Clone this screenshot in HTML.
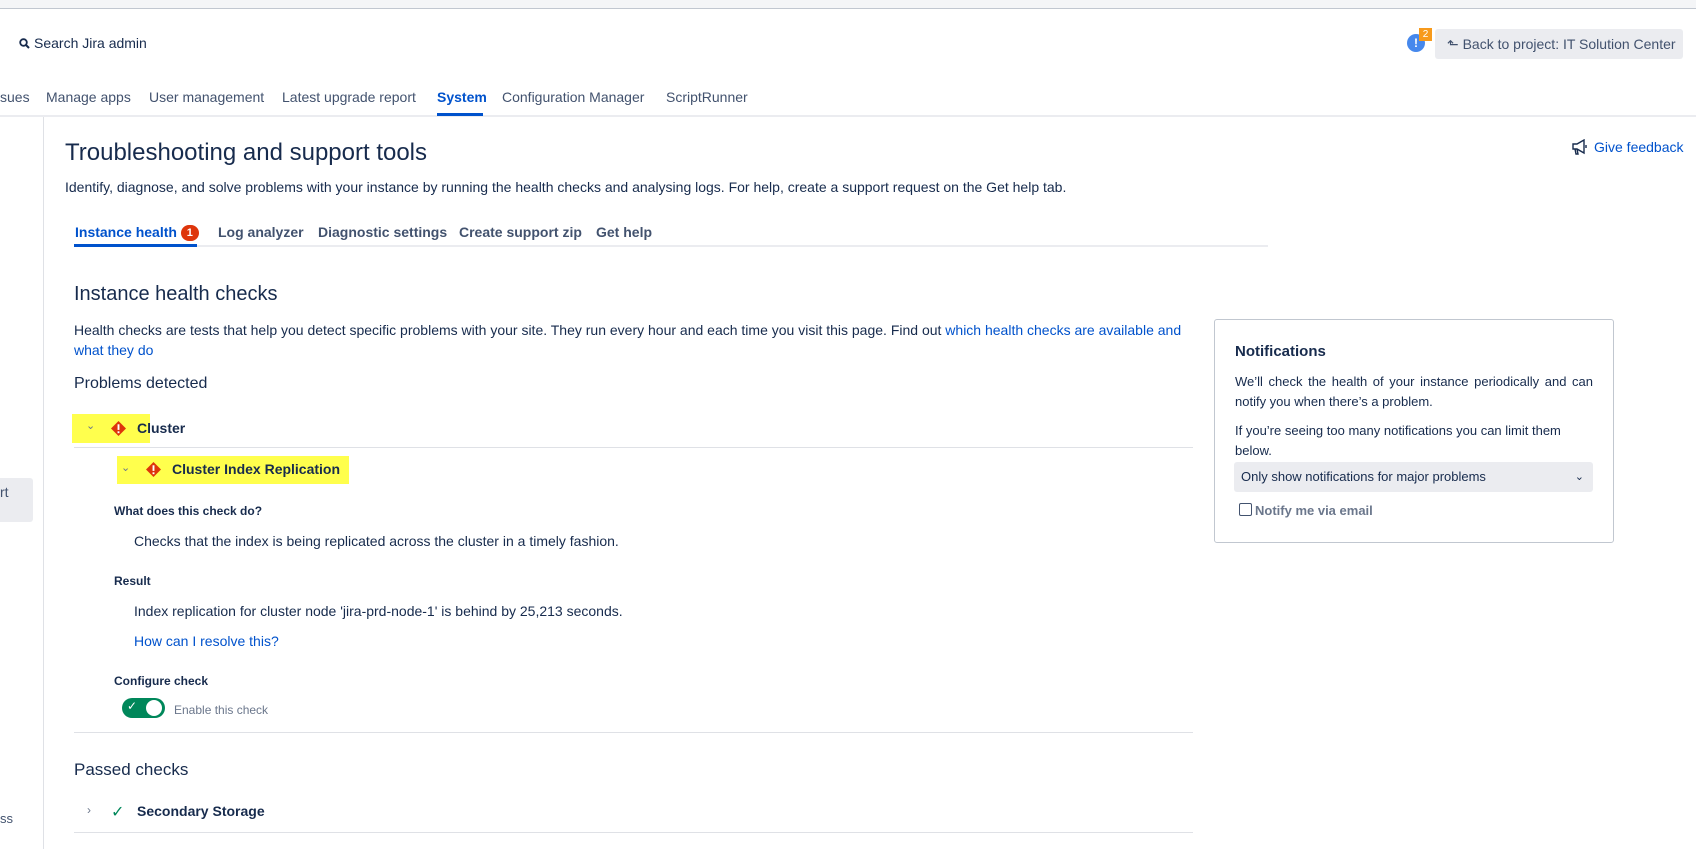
<!DOCTYPE html>
<html><head><meta charset="utf-8"><style>
*{box-sizing:border-box;margin:0;padding:0}
body{width:1696px;height:849px;overflow:hidden;background:#fff;font-family:"Liberation Sans",Arial,sans-serif;color:#172b4d;position:relative}
.a{position:absolute;white-space:nowrap}
.hl{background:#ffff4d}
.b{font-weight:bold}
</style></head><body>
<div class="a" style="left:0;top:0;width:1696px;height:9px;background:#f4f5f7;border-bottom:1px solid #c1c7d0"></div>
<div class="a" style="left:19px;top:35px;font-size:14px;color:#172b4d"><svg width="11" height="11" viewBox="0 0 11 11" style="vertical-align:-1px;margin-right:4px"><circle cx="4.5" cy="4.5" r="3.3" fill="none" stroke="#172b4d" stroke-width="1.8"/><path d="M7 7l3 3" stroke="#172b4d" stroke-width="2"/></svg>Search Jira admin</div>
<div class="a" style="left:1407px;top:34px;width:18px;height:18px;border-radius:50%;background:#4688ec;color:#fff;font-size:12px;font-weight:bold;text-align:center;line-height:18px">!</div>
<div class="a" style="left:1419px;top:28px;width:13px;height:13px;background:#f79a1c;color:#fff;font-size:10px;text-align:center;line-height:13px">2</div>
<div class="a" style="left:1435px;top:29px;width:248px;height:30px;background:#ebecf0;border-radius:3px;font-size:14px;color:#42526e;line-height:30px;padding-left:12px">⬑ Back to project: IT Solution Center</div>
<div class="a" style="top:89px;font-size:14px;color:#42526e;left:0">sues</div>
<div class="a" style="top:89px;font-size:14px;color:#42526e;left:46px">Manage apps</div>
<div class="a" style="top:89px;font-size:14px;color:#42526e;left:149px">User management</div>
<div class="a" style="top:89px;font-size:14px;color:#42526e;left:282px">Latest upgrade report</div>
<div class="a b" style="top:89px;font-size:14px;color:#0052cc;left:437px">System</div>
<div class="a" style="top:89px;font-size:14px;color:#42526e;left:502px">Configuration Manager</div>
<div class="a" style="top:89px;font-size:14px;color:#42526e;left:666px">ScriptRunner</div>
<div class="a" style="left:0;top:115px;width:1696px;height:2px;background:#ebecf0"></div>
<div class="a" style="left:437px;top:113px;width:46px;height:3px;background:#0052cc"></div>
<div class="a" style="left:43px;top:117px;width:1px;height:732px;background:#dfe1e6"></div>
<div class="a" style="left:0;top:478px;width:33px;height:44px;background:#ebecf0;border-radius:0 3px 3px 0"></div>
<div class="a" style="left:0;top:484px;font-size:14px;color:#42526e">rt</div>
<div class="a" style="left:0;top:811px;font-size:13px;color:#42526e">ss</div>
<div class="a" style="left:65px;top:139px;font-size:24px;color:#172b4d;font-weight:500">Troubleshooting and support tools</div>
<div class="a" style="left:65px;top:179px;font-size:14px;color:#172b4d">Identify, diagnose, and solve problems with your instance by running the health checks and analysing logs. For help, create a support request on the Get help tab.</div>
<div class="a" style="left:1572px;top:139px;font-size:14px;color:#0052cc"><svg width="18" height="16" viewBox="0 0 18 16" style="vertical-align:-3px;margin-right:4px"><path d="M1 5h4l7-4v13l-7-4H1zM3 10l1 5h2l-1-5M14 6v3" fill="none" stroke="#172b4d" stroke-width="1.4"/></svg>Give feedback</div>
<div class="a b" style="left:75px;top:224px;font-size:14px;color:#0052cc">Instance health <span style="display:inline-block;width:18px;height:16px;border-radius:8px;background:#de350b;color:#fff;font-size:11px;text-align:center;line-height:16px;vertical-align:1px">1</span></div>
<div class="a b" style="left:218px;top:224px;font-size:14px;color:#42526e">Log analyzer</div>
<div class="a b" style="left:318px;top:224px;font-size:14px;color:#42526e">Diagnostic settings</div>
<div class="a b" style="left:459px;top:224px;font-size:14px;color:#42526e">Create support zip</div>
<div class="a b" style="left:596px;top:224px;font-size:14px;color:#42526e">Get help</div>
<div class="a" style="left:74px;top:245px;width:1194px;height:2px;background:#ebecf0"></div>
<div class="a" style="left:74px;top:244px;width:123px;height:3px;background:#0052cc"></div>
<div class="a" style="left:74px;top:283px;font-size:20px;color:#172b4d">Instance health checks</div>
<div class="a" style="left:74px;top:320px;font-size:14px;line-height:20px;color:#172b4d;white-space:normal;width:1125px">Health checks are tests that help you detect specific problems with your site. They run every hour and each time you visit this page. Find out <span style="color:#0052cc">which health checks are available and what they do</span></div>
<div class="a" style="left:74px;top:375px;font-size:16px;color:#172b4d">Problems detected</div>
<div class="a hl" style="left:72px;top:414px;width:78px;height:29px"></div>
<div class="a" style="left:86px;top:419px;font-size:11px;color:#6b778c">⌄</div>
<div class="a" style="left:111px;top:421px"><svg width="15" height="15" viewBox="0 0 16 16"><path d="M8 0l8 8-8 8-8-8z" fill="#de350b"/><rect x="7" y="3.5" width="2" height="6" fill="#fff"/><rect x="7" y="11" width="2" height="2" fill="#fff"/></svg></div>
<div class="a b" style="left:137px;top:420px;font-size:14px">Cluster</div>
<div class="a" style="left:74px;top:447px;width:1119px;height:1px;background:#dfe1e6"></div>
<div class="a hl" style="left:117px;top:456px;width:232px;height:28px"></div>
<div class="a" style="left:121px;top:461px;font-size:11px;color:#6b778c">⌄</div>
<div class="a" style="left:146px;top:462px"><svg width="15" height="15" viewBox="0 0 16 16"><path d="M8 0l8 8-8 8-8-8z" fill="#de350b"/><rect x="7" y="3.5" width="2" height="6" fill="#fff"/><rect x="7" y="11" width="2" height="2" fill="#fff"/></svg></div>
<div class="a b" style="left:172px;top:461px;font-size:14px">Cluster Index Replication</div>
<div class="a b" style="left:114px;top:504px;font-size:12px;color:#172b4d">What does this check do?</div>
<div class="a" style="left:134px;top:533px;font-size:14px">Checks that the index is being replicated across the cluster in a timely fashion.</div>
<div class="a b" style="left:114px;top:574px;font-size:12px">Result</div>
<div class="a" style="left:134px;top:603px;font-size:14px">Index replication for cluster node 'jira-prd-node-1' is behind by 25,213 seconds.</div>
<div class="a" style="left:134px;top:633px;font-size:14px;color:#0052cc">How can I resolve this?</div>
<div class="a b" style="left:114px;top:674px;font-size:12px">Configure check</div>
<div class="a" style="left:122px;top:698px;width:43px;height:20px;border-radius:10px;background:#00875a"></div>
<div class="a" style="left:146px;top:700px;width:16px;height:16px;border-radius:50%;background:#fff"></div>
<div class="a" style="left:127px;top:699px;font-size:12px;color:#fff">✓</div>
<div class="a" style="left:174px;top:703px;font-size:12px;color:#6b778c">Enable this check</div>
<div class="a" style="left:74px;top:732px;width:1119px;height:1px;background:#dfe1e6"></div>
<div class="a" style="left:74px;top:760px;font-size:17px">Passed checks</div>
<div class="a" style="left:87px;top:803px;font-size:12px;color:#6b778c">›</div>
<div class="a" style="left:111px;top:802px;font-size:16px;color:#00875a">✓</div>
<div class="a b" style="left:137px;top:803px;font-size:14px">Secondary Storage</div>
<div class="a" style="left:74px;top:832px;width:1119px;height:1px;background:#dfe1e6"></div>
<div class="a" style="left:1214px;top:319px;width:400px;height:224px;border:1px solid #c1c7d0;border-radius:3px"></div>
<div class="a b" style="left:1235px;top:343px;font-size:15px">Notifications</div>
<div class="a" style="left:1235px;top:372px;width:358px;font-size:13px;line-height:20px;white-space:normal;text-align:justify">We’ll check the health of your instance periodically and can notify you when there’s a problem.</div>
<div class="a" style="left:1235px;top:421px;width:358px;font-size:13px;line-height:20px;white-space:normal">If you’re seeing too many notifications you can limit them below.</div>
<div class="a" style="left:1234px;top:462px;width:359px;height:30px;background:#ebecf0;border-radius:3px;font-size:13px;line-height:30px;padding-left:7px">Only show notifications for major problems<span style="position:absolute;right:9px;font-size:11px">⌄</span></div>
<div class="a" style="left:1239px;top:503px;width:13px;height:13px;border:1px solid #42526e;border-radius:2px;background:#fff"></div>
<div class="a b" style="left:1255px;top:503px;font-size:13px;color:#6b778c">Notify me via email</div>
</body></html>
